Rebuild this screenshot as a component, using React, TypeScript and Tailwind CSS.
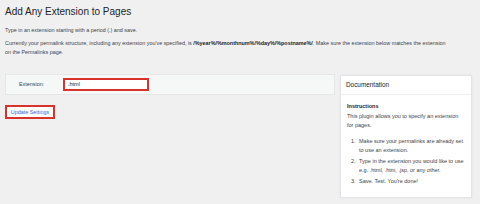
import React from "react";

export default function App() {
  return (
    <div
      className="w-[480px] h-[204px] overflow-hidden bg-[#f0f0f1] pl-[5px] pr-[8px] text-[#3c434a]"
      style={{ fontFamily: '"Liberation Sans", Arial, sans-serif' }}
    >
      <h1 className="pt-[6px] text-[10px] leading-[12px] text-[#1d2327]">
        Add Any Extension to Pages
      </h1>
      <p className="mt-[8px] text-[5.4px] leading-[8px]">
        Type in an extension starting with a period (.) and save.
      </p>
      <p className="mt-[5px] text-[5.4px] leading-[9px] whitespace-nowrap">
        Currently your permalink structure, including any extension you've specified, is{" "}
        <b className="text-[#1d2327]">/%year%/%monthnum%/%day%/%postname%/</b>. Make sure the extension below matches the extension
        <br />
        on the Permalinks page.
      </p>
      <div className="mt-[17px] flex gap-[5px] items-start">
        <div className="w-[330px] flex flex-col">
          <div className="h-[21px] bg-[#f6f7f7] border border-[#e6e6e6] flex items-center">
            <span className="w-[57px] pl-[13px] text-[5.4px]">Extension:</span>
            <div className="w-[86px] h-[13px] bg-white border-2 border-[#d9322b] flex items-center pl-[3px] text-[5.5px] text-[#1d2327]">
              .html
            </div>
          </div>
          <div className="mt-[10px] w-[50px] h-[14px] border-2 border-[#d9322b] bg-white flex items-center justify-center text-[5.4px] text-[#3862d8]">
            Update Settings
          </div>
        </div>
        <div className="mt-[1px] w-[132px] h-[123px] bg-white border border-[#e2e4e7] shadow-[0_0_2px_rgba(0,0,0,0.06)]">
          <div className="px-[5px] pt-[4px] pb-[4px] text-[6.4px] text-[#1d2327] border-b border-[#f0f0f1]">
            Documentation
          </div>
          <div className="px-[6px] text-[5.5px] leading-[8.5px]">
            <div className="mt-[7px] font-bold text-[#1d2327]">Instructions</div>
            <p className="mt-[2px]">This plugin allows you to specify an extension for pages.</p>
            <ol className="mt-[8px] pl-[10px] list-decimal">
              <li className="pl-[2px]">Make sure your permalinks are already set to use an extension.</li>
              <li className="pl-[2px] mt-[3px]">Type in the extension you would like to use e.g. .html, .htm, .jsp, or any other.</li>
              <li className="pl-[2px] mt-[3px]">Save. Test. You're done!</li>
            </ol>
          </div>
        </div>
      </div>
    </div>
  );
}
